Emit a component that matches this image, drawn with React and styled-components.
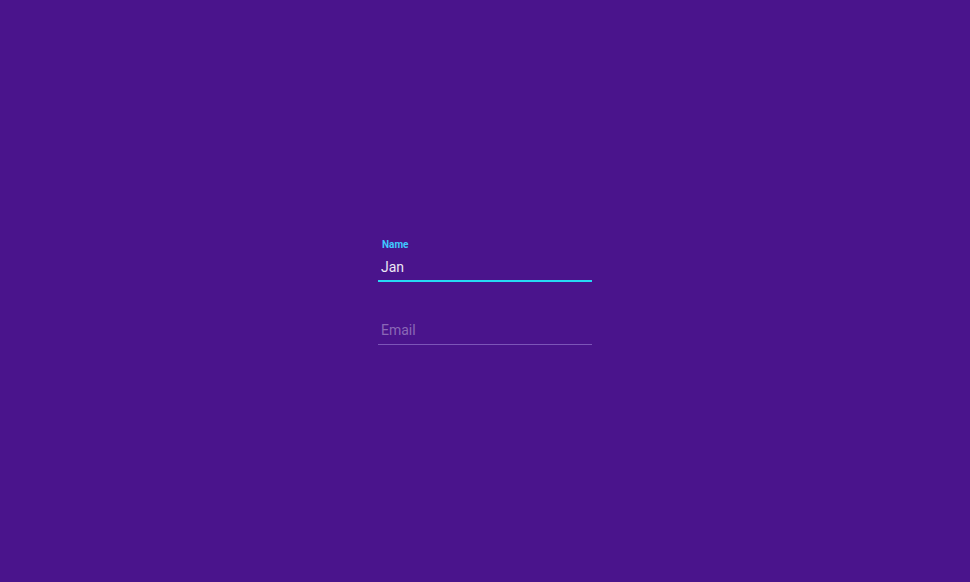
import React, { useState } from 'react'
import styled, { createGlobalStyle } from 'styled-components'

const GlobalStyle = createGlobalStyle`
  html, body, #root {
    margin: 0;
    padding: 0;
    height: 100%;
  }
  body {
    background: #4a148c;
    font-family: Roboto, "Noto Sans", sans-serif;
  }
`

const Page = styled.main`
  height: 100%;
  display: flex;
  align-items: center;
  justify-content: center;
`

const Form = styled.form`
  width: 214px;
  display: flex;
  flex-direction: column;
  gap: 18px;
`

const Field = styled.label`
  display: flex;
  flex-direction: column;
`

const Label = styled.span`
  height: 13px;
  margin-bottom: 4px;
  padding-left: 4px;
  font-size: 10px;
  font-weight: 700;
  line-height: 13px;
  color: #3fc8ff;
  visibility: ${props => (props.floating ? 'visible' : 'hidden')};
`

const Input = styled.input`
  box-sizing: border-box;
  height: ${props => (props.active ? '27px' : '28px')};
  margin: 0;
  padding: 0 3px ${props => (props.active ? '0' : '1px')};
  border: 0;
  border-bottom: ${props => (props.active ? '2px solid #27d8f5' : '1px solid #7c55b8')};
  outline: 0;
  background: transparent;
  font-family: Roboto, "Noto Sans", sans-serif;
  font-size: 14px;
  color: #ece6f4;
  caret-color: #b9a6d6;

  &::placeholder {
    color: #8a68b6;
    opacity: 1;
  }
`

export default function App() {
  const [name, setName] = useState('Jan')
  const [email, setEmail] = useState('')

  return (
    <>
      <GlobalStyle />
      <Page>
        <Form onSubmit={e => e.preventDefault()}>
          <Field>
            <Label floating>Name</Label>
            <Input
              active
              autoFocus
              value={name}
              onChange={e => setName(e.target.value)}
            />
          </Field>
          <Field>
            <Label>Email</Label>
            <Input
              placeholder="Email"
              value={email}
              onChange={e => setEmail(e.target.value)}
            />
          </Field>
        </Form>
      </Page>
    </>
  )
}
